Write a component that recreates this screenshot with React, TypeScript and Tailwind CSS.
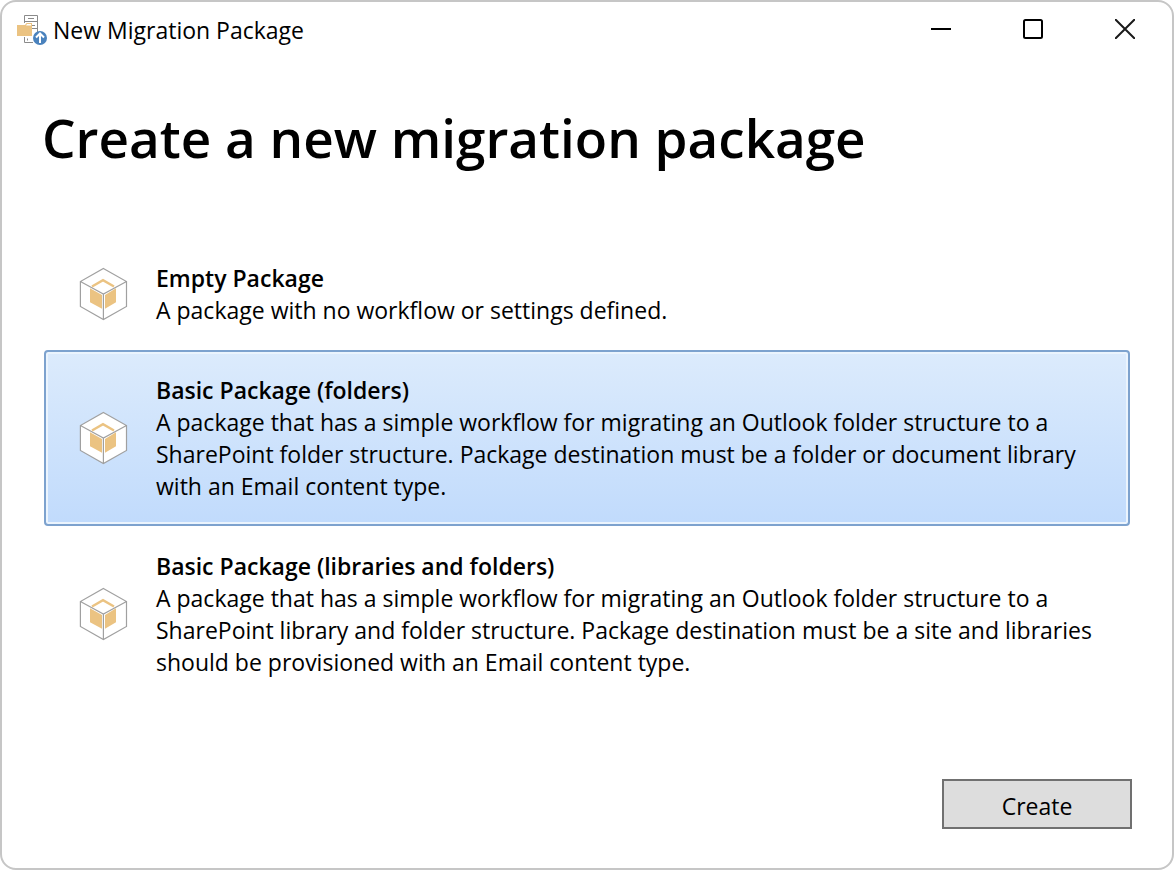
import { useState } from "react"

type PackageOption = {
	id: string
	title: string
	description: string
}

const options: PackageOption[] = [
	{
		id: "empty",
		title: "Empty Package",
		description: "A package with no workflow or settings defined.",
	},
	{
		id: "folders",
		title: "Basic Package (folders)",
		description:
			"A package that has a simple workflow for migrating an Outlook folder structure to a SharePoint folder structure. Package destination must be a folder or document library with an Email content type.",
	},
	{
		id: "libraries",
		title: "Basic Package (libraries and folders)",
		description:
			"A package that has a simple workflow for migrating an Outlook folder structure to a SharePoint library and folder structure. Package destination must be a site and libraries should be provisioned with an Email content type.",
	},
]

function AppIcon() {
	return (
		<svg width="32" height="32" viewBox="0 0 32 32" fill="none" aria-hidden="true">
			<path d="M8.500 9V1.500h13V18M8.500 23v5.500H17" stroke="#8a8a8a" />
			<path d="M12 4.500h6M8.500 7.500h13M16 11.500h3M16 14.500h5.500M11.500 24.500v2" stroke="#8a8a8a" />
			<path d="M1 11h8l1.500-2H16v13H1z" fill="#ebc382" />
			<path d="M10 11.500l1-1.500h4v1.500z" fill="#fff" />
			<circle cx="24" cy="24" r="7" fill="#4a82bd" />
			<path d="M24 29v-9M20 23.500l4-4 4 4" stroke="#fff" strokeWidth="2" />
		</svg>
	)
}

function PackageIcon() {
	return (
		<svg
			width="50"
			height="54"
			viewBox="0 0 50 54"
			fill="none"
			className="shrink-0"
			aria-hidden="true"
		>
			<path d="M25.300 1.500 48.500 14.500v25L25.300 52.500 2.300 39.500v-25z" fill="#fff" />
			<path d="M14 19.500 25 13.200l11 6.300" stroke="#ebc382" strokeWidth="2.400" />
			<path d="M12 21.300 24 28v13.700l-12-6.400zM38 21.300 27 28v13.700l11-6.400z" fill="#ebc382" />
			<path
				d="M25.400 1.500 48.500 14.500v25L25.400 52.500 2.400 39.500v-25zM2.400 14.500 25.400 27l23.100-12.500M25.400 27v25.500"
				stroke="#a0a0a0"
				strokeWidth="1.200"
			/>
		</svg>
	)
}

function TitleBar() {
	return (
		<header className="flex items-center justify-between pt-2 pr-px pl-3.5">
			<div className="flex items-center gap-[5px] pt-0.5">
				<AppIcon />
				<span className="text-[23px] leading-8">New Migration Package</span>
			</div>
			<div className="flex">
				<button type="button" aria-label="Minimize" className="flex h-[38px] w-[92px] items-center justify-center">
					<svg width="20" height="20" viewBox="0 0 20 20" aria-hidden="true">
						<path d="M0 10h20" stroke="#000" strokeWidth="2" />
					</svg>
				</button>
				<button type="button" aria-label="Maximize" className="flex h-[38px] w-[92px] items-center justify-center">
					<svg width="20" height="20" viewBox="0 0 20 20" fill="none" aria-hidden="true">
						<rect x="1" y="1" width="18" height="18" rx="1.500" stroke="#000" strokeWidth="2" />
					</svg>
				</button>
				<button type="button" aria-label="Close" className="flex h-[38px] w-[92px] items-center justify-center">
					<svg width="20" height="20" viewBox="0 0 20 20" aria-hidden="true">
						<path d="M0 0l20 20M20 0L0 20" stroke="#1a1a1a" strokeWidth="2" />
					</svg>
				</button>
			</div>
		</header>
	)
}

function App() {
	const [selected, setSelected] = useState("folders")

	return (
		<div className="flex min-h-screen flex-col rounded-2xl border-2 border-[#c6c6c6] bg-white font-['Open_Sans',sans-serif] text-black">
			<TitleBar />

			<form className="flex grow flex-col px-10 pb-[39px]" onSubmit={(e) => e.preventDefault()}>
				<h1 className="mt-[58px] text-[53px] leading-[64px] font-semibold">
					Create a new migration package
				</h1>

				<fieldset aria-label="Package type" className="mx-0.5 mt-[68px] flex flex-col">
					{options.map((option) => (
						<label
							key={option.id}
							className="flex items-center gap-7 rounded-sm border-2 border-transparent py-[22px] pr-8 pl-8 has-checked:border-[#7da2ce] has-checked:bg-linear-to-b has-checked:from-[#dcebfc] has-checked:to-[#c1dbfc] has-checked:inset-shadow-[0_0_0_2px_#ebf4fd]"
						>
							<input
								type="radio"
								name="package"
								value={option.id}
								checked={selected === option.id}
								onChange={() => setSelected(option.id)}
								className="sr-only"
							/>
							<PackageIcon />
							<span className="text-[23px] leading-8">
								<span className="block font-semibold">{option.title}</span>
								<span className="block">{option.description}</span>
							</span>
						</label>
					))}
				</fieldset>

				<button
					type="submit"
					className="mt-auto h-[50px] w-[190px] self-end border-2 border-[#707070] bg-[#dddddd] pt-1 text-[23px] leading-8"
				>
					Create
				</button>
			</form>
		</div>
	)
}

export default App
